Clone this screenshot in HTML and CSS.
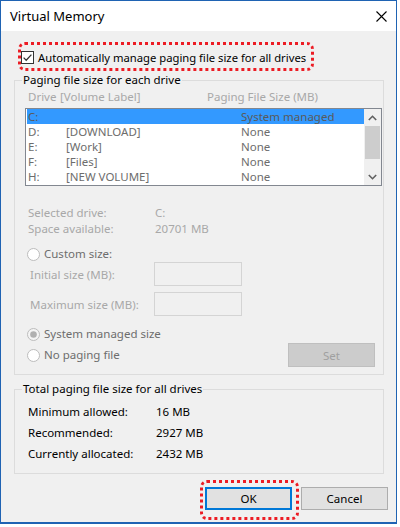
FILE: index.html
```html
<!DOCTYPE html>
<html lang="en">
<head>
<meta charset="utf-8">
<title>Virtual Memory</title>
<link rel="stylesheet" href="styles.css">
</head>
<body>
<div class="window">
  <div class="titlebar">
    <span class="title">Virtual Memory</span>
    <svg class="close" width="11" height="11" viewBox="0 0 11 11"><path d="M0.5 0.5 L10.5 10.5 M10.5 0.5 L0.5 10.5" stroke="#000" stroke-width="1.1" fill="none"/></svg>
  </div>
  <div class="content">
    <div class="auto annotated">
      <svg class="checkbox" width="13" height="13" viewBox="0 0 13 13"><rect x="0.5" y="0.5" width="12" height="12" fill="#fff" stroke="#333"/><path d="M2.6 6.6 L5.2 9.2 L10.4 3.6" stroke="#333" stroke-width="1.3" fill="none"/></svg>
      <span class="auto-label">Automatically manage paging file size for all drives</span>
    </div>

    <section class="group group-drives">
      <div class="group-title">Paging file size for each drive</div>
      <div class="group-body">
        <div class="list-header">
          <span>Drive</span><span>[Volume Label]</span><span>Paging File Size (MB)</span>
        </div>
        <div class="listbox">
          <div class="rows">
            <div class="row selected"><span>C:</span><span></span><span>System managed</span></div>
            <div class="row"><span>D:</span><span>[DOWNLOAD]</span><span>None</span></div>
            <div class="row"><span>E:</span><span>[Work]</span><span>None</span></div>
            <div class="row"><span>F:</span><span>[Files]</span><span>None</span></div>
            <div class="row"><span>H:</span><span>[NEW VOLUME]</span><span>None</span></div>
          </div>
          <div class="scrollbar">
            <div class="arrow"><svg width="9" height="6" viewBox="0 0 9 6"><path d="M0.8 5 L4.5 1.3 L8.2 5" stroke="#606060" stroke-width="1.6" fill="none"/></svg></div>
            <div class="track"><div class="thumb"></div></div>
            <div class="arrow"><svg width="9" height="6" viewBox="0 0 9 6"><path d="M0.8 1 L4.5 4.7 L8.2 1" stroke="#606060" stroke-width="1.6" fill="none"/></svg></div>
          </div>
        </div>

        <div class="info">
          <div class="info-row"><span>Selected drive:</span><span>C:</span></div>
          <div class="info-row"><span>Space available:</span><span>20701 MB</span></div>
        </div>

        <div class="radio-row radio-custom">
          <svg class="radio" width="13" height="13" viewBox="0 0 13 13"><circle cx="6.5" cy="6.5" r="6" fill="#fff" stroke="#bcbcbc"/></svg>
          <span>Custom size:</span>
        </div>
        <div class="field-row">
          <span class="field-label">Initial size (MB):</span><span class="textbox"></span>
        </div>
        <div class="field-row field-row-second">
          <span class="field-label">Maximum size (MB):</span><span class="textbox"></span>
        </div>

        <div class="radio-row radio-system">
          <svg class="radio" width="13" height="13" viewBox="0 0 13 13"><circle cx="6.5" cy="6.5" r="6" fill="#f4f4f4" stroke="#bcbcbc"/><circle cx="6.5" cy="6.5" r="3.3" fill="#b0b0b0"/></svg>
          <span>System managed size</span>
        </div>
        <div class="nopaging-row">
          <div class="radio-row">
            <svg class="radio" width="13" height="13" viewBox="0 0 13 13"><circle cx="6.5" cy="6.5" r="6" fill="#fff" stroke="#bcbcbc"/></svg>
            <span>No paging file</span>
          </div>
          <span class="set-btn">Set</span>
        </div>
      </div>
    </section>

    <section class="group group-total">
      <div class="group-title">Total paging file size for all drives</div>
      <div class="group-body">
        <div class="total-row"><span>Minimum allowed:</span><span>16 MB</span></div>
        <div class="total-row"><span>Recommended:</span><span>2927 MB</span></div>
        <div class="total-row"><span>Currently allocated:</span><span>2432 MB</span></div>
      </div>
    </section>

    <div class="buttons">
      <span class="btn btn-ok annotated-ok">OK</span>
      <span class="btn btn-cancel">Cancel</span>
    </div>
  </div>
</div>
</body>
</html>
```

FILE: styles.css
```css
*, *::before, *::after { box-sizing: border-box; }

html, body {
  margin: 0;
  padding: 0;
  background: #ffffff;
}

body {
  font-family: "Noto Sans", "Open Sans", "DejaVu Sans", sans-serif;
  font-size: 11.5px;
  color: #000;
}

.window {
  width: 397px;
  height: 524px;
  border: 1px solid #1f63b3;
  border-bottom-width: 2px;
  background: #f0f0f0;
  display: flex;
  flex-direction: column;
}

.titlebar {
  height: 30px;
  flex: none;
  background: #ffffff;
  display: flex;
  align-items: center;
  justify-content: space-between;
  padding: 0 9px 0 9px;
}

.title {
  font-size: 13px;
  line-height: 16px;
}

.close { display: block; }

.content {
  padding: 0 12px 0 13px;
}

.auto {
  margin-top: 19px;
  height: 15px;
  padding-left: 7px;
  display: flex;
  align-items: center;
  gap: 4px;
  line-height: 15px;
  position: relative;
}

.auto-label { font-size: 11.25px; }

.checkbox { display: block; flex: none; }

.annotated::after {
  content: "";
  position: absolute;
  left: 4px;
  top: -8px;
  width: 296px;
  height: 29px;
  border: 3px dotted #ec1c24;
  border-radius: 7px;
  pointer-events: none;
}

.group {
  border: 1px solid #dcdcdc;
}

.group-title {
  width: max-content;
  margin: -9px 0 0 7px;
  padding: 0 1px;
  line-height: 16px;
  background: #f0f0f0;
}

.group-drives {
  margin-top: 15px;
}

.group-drives .group-body {
  padding: 1px 8px 7px 10px;
}

.list-header {
  display: grid;
  grid-template-columns: 32px 147px auto;
  height: 15px;
  line-height: 15px;
  padding-left: 3px;
  color: #a8a8a8;
}

.listbox {
  margin-top: 4px;
  width: 357px;
  height: 78px;
  border: 1px solid #828790;
  background: #ffffff;
  display: flex;
}

.rows {
  flex: 1;
  padding-left: 1px;
}

.row {
  display: grid;
  grid-template-columns: 38px 175px auto;
  height: 15px;
  line-height: 15px;
  padding-left: 1px;
  color: #6d6d6d;
  white-space: nowrap;
}

.row.selected {
  background: #3399ff;
  color: #5a5a5a;
}

.scrollbar {
  width: 17px;
  flex: none;
  background: #f0f0f0;
  display: flex;
  flex-direction: column;
}

.arrow {
  height: 17px;
  display: flex;
  align-items: center;
  justify-content: center;
}

.arrow svg { display: block; }

.track {
  flex: 1;
  padding: 0 1px;
}

.thumb {
  height: 33px;
  background: #cdcdcd;
}

.info {
  margin-top: 19px;
}

.info-row {
  display: grid;
  grid-template-columns: 127px auto;
  height: 16px;
  line-height: 16px;
  padding-left: 3px;
  color: #a8a8a8;
}

.radio-row {
  display: flex;
  align-items: center;
  gap: 4px;
  height: 16px;
  line-height: 16px;
  padding-left: 2px;
  color: #6d6d6d;
}

.radio { display: block; flex: none; }

.radio-custom { margin-top: 9px; }

.field-row {
  display: grid;
  grid-template-columns: 124px 88px;
  align-items: center;
  height: 24px;
  padding-left: 5px;
  color: #a8a8a8;
}

.field-row-second { margin-top: 6px; }

.textbox {
  display: block;
  height: 24px;
  border: 1px solid #d4d4d4;
  background: #f0f0f0;
}

.radio-system { margin-top: 10px; }

.nopaging-row {
  margin-top: 1px;
  height: 24px;
  display: flex;
  align-items: center;
  justify-content: space-between;
}

.set-btn {
  width: 87px;
  height: 24px;
  border: 1px solid #bfbfbf;
  background: #cccccc;
  color: #a0a0a0;
  display: flex;
  align-items: center;
  justify-content: center;
}

.group-total {
  margin-top: 14px;
}

.group-total .group-body {
  padding: 4px 8px 9px 13px;
}

.total-row {
  display: grid;
  grid-template-columns: 128px auto;
  height: 21px;
  line-height: 21px;
}

.buttons {
  margin-top: 13px;
  margin-right: -4px;
  display: flex;
  justify-content: flex-end;
  gap: 9px;
}

.btn {
  width: 87px;
  height: 23px;
  background: #e1e1e1;
  display: flex;
  align-items: center;
  justify-content: center;
  position: relative;
}

.btn-ok { border: 2px solid #0078d7; }
.btn-cancel { border: 1px solid #adadad; }

.annotated-ok::after {
  content: "";
  position: absolute;
  left: -7px;
  top: -9px;
  width: 99px;
  height: 40px;
  border: 3px dotted #ec1c24;
  border-radius: 7px;
  pointer-events: none;
}
```
